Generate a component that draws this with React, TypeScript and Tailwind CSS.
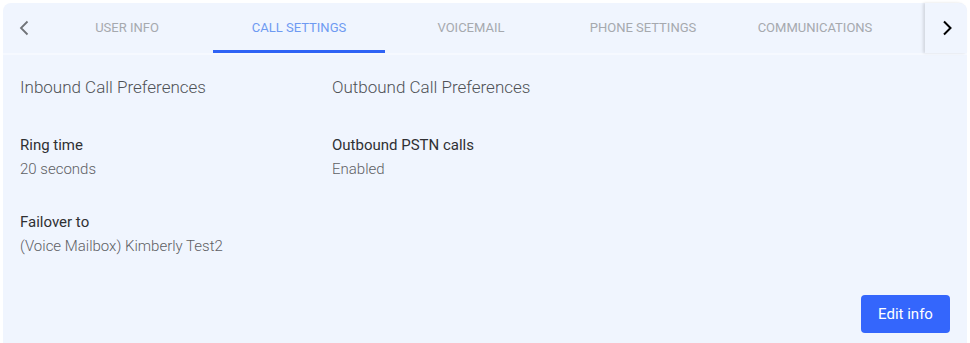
const tabs = ["USER INFO", "CALL SETTINGS", "VOICEMAIL", "PHONE SETTINGS", "COMMUNICATIONS"];

function Field({ label, value }: { label: string; value: string }) {
  return (
    <div className="flex flex-col">
      <div className="text-[15px] leading-6 text-[#2f3033]">{label}</div>
      <div className="text-[15px] font-light leading-6 text-[#5e6064]">{value}</div>
    </div>
  );
}

export default function App() {
  return (
    <div className="h-[343px] w-[970px] bg-white px-[3px] pt-[3px] font-['Roboto',sans-serif]">
      <div className="flex h-full flex-col rounded-t-lg bg-[#f0f5fe]">
        <div className="flex h-[52px] border-b-2 border-[#f6f9ff]">
          <button className="flex w-[38px] shrink-0 items-center justify-center pl-1 text-[#707378]">
            <svg width="10" height="16" viewBox="0 0 10 16" fill="none">
              <path d="M8.5 1.5L2 8l6.5 6.5" stroke="currentColor" strokeWidth="1.8" />
            </svg>
          </button>
          <div className="flex flex-1 overflow-hidden">
            {tabs.map((t, i) => (
              <div
                key={t}
                className={
                  i === 1
                    ? "flex w-[172px] shrink-0 items-center justify-center border-b-[3px] border-[#2f63f5] pt-[3px] text-[13px] text-[#6e9af2]"
                    : "flex w-[172px] shrink-0 items-center justify-center text-[13px] text-[#a6a9ae]"
                }
              >
                {t}
              </div>
            ))}
          </div>
          <button className="flex w-[42px] shrink-0 items-center justify-center rounded-tr-lg bg-[#f0f5fe] pl-[2px] text-black shadow-[-2px_0_3px_rgba(0,0,0,0.12)]">
            <svg width="10" height="16" viewBox="0 0 10 16" fill="none">
              <path d="M2 1.5L8.5 8 2 14.5" stroke="currentColor" strokeWidth="2" />
            </svg>
          </button>
        </div>

        <div className="flex flex-1 flex-col px-[17px] pt-[20px]">
          <div className="flex">
            <div className="flex w-[312px] flex-col">
              <h2 className="text-[17px] font-light leading-6 text-[#4f5256]">Inbound Call Preferences</h2>
              <div className="mt-[34px] flex flex-col gap-[29px]">
                <Field label="Ring time" value="20 seconds" />
                <Field label="Failover to" value="(Voice Mailbox) Kimberly Test2" />
              </div>
            </div>
            <div className="flex flex-col">
              <h2 className="text-[17px] font-light leading-6 text-[#4f5256]">Outbound Call Preferences</h2>
              <div className="mt-[34px] flex flex-col">
                <Field label="Outbound PSTN calls" value="Enabled" />
              </div>
            </div>
          </div>
          <div className="mt-[37px] flex justify-end">
            <button className="h-[38px] w-[89px] rounded bg-[#3466fc] text-[15px] text-white">Edit info</button>
          </div>
        </div>
      </div>
    </div>
  );
}
